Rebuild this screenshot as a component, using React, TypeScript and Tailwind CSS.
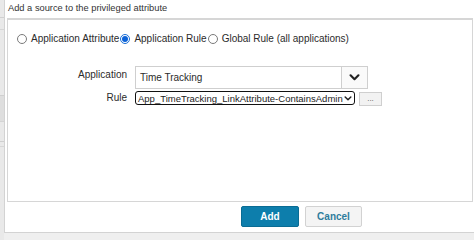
function Radio({ checked }: { checked?: boolean }) {
  return checked ? (
    <span className="flex h-[10px] w-[10px] items-center justify-center rounded-full border border-[#1a6fd6] bg-white">
      <span className="h-[6px] w-[6px] rounded-full bg-[#0b62d8]" />
    </span>
  ) : (
    <span className="h-[10px] w-[10px] rounded-full border border-[#7a7a7a] bg-white" />
  );
}

const options = [
  { label: "Application Attribute", checked: false },
  { label: "Application Rule", checked: true },
  { label: "Global Rule (all applications)", checked: false },
];

function Chevron({ className }: { className?: string }) {
  return (
    <svg viewBox="0 0 12 8" className={className} fill="none" stroke="currentColor" strokeWidth="2.4" strokeLinecap="round" strokeLinejoin="round">
      <path d="M1.5 1.5 6 6l4.5-4.5" />
    </svg>
  );
}

export default function App() {
  return (
    <div className="relative flex h-[240px] w-[474px] overflow-hidden bg-[#efefef] font-['Liberation_Sans',Arial,sans-serif] text-[#2b2b2b]">
      {/* page behind the dialog */}
      <div className="flex w-[4px] flex-col bg-[#e9e9e9]">
        <div className="h-[18px] border-b border-[#d0d0d0]" />
        <div className="h-[12px] border-b border-[#d6d6d6]" />
        <div className="h-[66px] border-b border-[#cfcfcf]" />
        <div className="h-[26px] border-b border-[#d4d4d4] bg-[#dedede]" />
        <div className="h-[20px] border-b border-[#cfcfcf]" />
        <div className="h-[5px] border-b border-[#d6d6d6]" />
        <div className="flex-1" />
      </div>

      <div className="flex h-[233px] flex-1 flex-col border-b border-l border-[#d3d3d3] bg-white">
        <div className="h-[18px] pl-[3px] pt-[3px] text-[9.3px] leading-[11px] text-[#333]">
          Add a source to the privileged attribute
        </div>

        <div className="ml-[2px] mr-[1px] flex h-[184px] flex-col border border-t-2 border-[#d6d6d6]">
          <div className="mt-[13px] flex items-center gap-[1px] pl-[9px] text-[10px] leading-[12px]">
            {options.map((o) => (
              <label key={o.label} className="flex items-center gap-[4px]">
                <Radio checked={o.checked} />
                <span>{o.label}</span>
              </label>
            ))}
          </div>

          <div className="mt-[21px] flex">
            <div className="w-[119px] pt-[3px] text-right text-[10px] leading-[12px]">Application</div>
            <div className="ml-[8px] flex h-[23px] w-[233px] border border-[#cfcfcf] bg-white">
              <div className="flex flex-1 items-center pl-[4px] text-[10px]">Time Tracking</div>
              <div className="flex w-[26px] items-center justify-center border-l border-[#cfcfcf] bg-[#fafafa] text-[#222]">
                <Chevron className="h-[7px] w-[11px]" />
              </div>
            </div>
          </div>

          <div className="mt-[2px] flex">
            <div className="w-[119px] text-right text-[10px] leading-[13px]">Rule</div>
            <div className="ml-[8px] flex h-[14px] w-[220px] items-center rounded-[3px] border-[1.5px] border-[#111] bg-white pl-[2px] text-[9.5px] leading-[11px] text-[#222]">
              <span className="flex-1 whitespace-nowrap">App_TimeTracking_LinkAttribute-ContainsAdmin</span>
              <Chevron className="mr-[2px] h-[5px] w-[8px]" />
            </div>
            <div className="ml-[4px] mt-[1px] flex h-[14px] w-[23px] items-center justify-center border border-[#cfcfcf] bg-[#f2f2f2] text-[8px] leading-[8px] text-[#555]">
              ...
            </div>
          </div>
        </div>

        <div className="flex gap-[6px] pl-[236px] pt-[4px]">
          <button className="h-[21px] w-[58px] rounded-[2px] border border-[#0a6c94] bg-[#0d7eac] text-[10px] font-bold text-white">
            Add
          </button>
          <button className="h-[21px] w-[57px] rounded-[2px] border border-[#d2d2d2] bg-[#f4f4f4] text-[10px] font-bold text-[#2f7d9c]">
            Cancel
          </button>
        </div>
      </div>
    </div>
  );
}
